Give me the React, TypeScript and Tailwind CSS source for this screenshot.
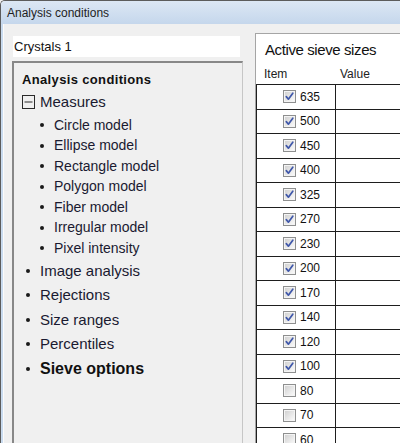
import React from "react";

const subItems = [
  "Circle model",
  "Ellipse model",
  "Rectangle model",
  "Polygon model",
  "Fiber model",
  "Irregular model",
  "Pixel intensity",
];

const topItems = ["Image analysis", "Rejections", "Size ranges", "Percentiles"];

const sieves: [string, boolean][] = [
  ["635", true],
  ["500", true],
  ["450", true],
  ["400", true],
  ["325", true],
  ["270", true],
  ["230", true],
  ["200", true],
  ["170", true],
  ["140", true],
  ["120", true],
  ["100", true],
  ["80", false],
  ["70", false],
  ["60", false],
];

function CheckBox({ checked }: { checked: boolean }) {
  return (
    <svg width="13" height="13" viewBox="0 0 13 13" className="shrink-0">
      <defs>
        <linearGradient id="cbg" x1="0" y1="0" x2="1" y2="1">
          <stop offset="0" stopColor="#d2d2d2" />
          <stop offset="1" stopColor="#f9f9f9" />
        </linearGradient>
      </defs>
      <rect x="0.5" y="0.5" width="12" height="12" fill="#f4f4f4" stroke="#8e8f8f" />
      <rect x="2" y="2" width="9" height="9" fill="url(#cbg)" />
      {checked && (
        <path
          d="M3.3 6.6 L5.4 9.2 L9.8 3.2"
          stroke="#4058aa"
          strokeWidth="1.7"
          fill="none"
          strokeLinecap="round"
          strokeLinejoin="round"
        />
      )}
    </svg>
  );
}

function MinusBox() {
  return (
    <svg width="13" height="15" viewBox="0 0 13 15" className="shrink-0">
      <rect x="0.5" y="0.5" width="12" height="13" fill="none" stroke="#2a2a2a" />
      <line x1="2.5" y1="7" x2="10.5" y2="7" stroke="#2a2a2a" />
    </svg>
  );
}

function Bullet() {
  return <span className="block w-[4px] h-[4px] rounded-full bg-[#1a1a1a] shrink-0" />;
}

export default function App() {
  return (
    <div className="w-[400px] h-[443px] overflow-hidden bg-[#f0f0f0] font-['Liberation_Sans',Arial,sans-serif] text-[#111]">
      <div className="h-full flex flex-col border-l border-t border-[#5c5c5c] rounded-tl-[5px] overflow-hidden">
        <div className="h-[23px] shrink-0 flex items-center pl-[6px] text-[12px] text-[#1e1e1e] bg-linear-to-b from-[#dce7f4] to-[#c5d7ec]">
          Analysis conditions
        </div>
        <div className="flex-1 min-h-0 flex border-l-2 border-[#c9dbef]">
          <div className="flex-1 min-h-0 flex border-l border-[#fbfbfb] pl-[8px]">
            {/* left column */}
            <div className="w-[231px] shrink-0 flex flex-col">
              <div className="mt-[12px] ml-[1px] w-[227px] h-[21px] bg-white flex items-center pl-[1px] text-[13px] text-[#111]">
                Crystals 1
              </div>
              <div className="mt-[4px] flex-1 border-l-2 border-t-2 border-[#888] border-r border-r-[#c6c6c6] pl-[8px] text-[#1a1a30]">
                <div className="mt-[7px] h-[20px] flex items-center text-[13px] font-bold tracking-[0.35px] text-[#111]">
                  Analysis conditions
                </div>
                <div className="h-[25px] flex items-center">
                  <MinusBox />
                  <span className="ml-[5px] text-[15px]">Measures</span>
                </div>
                {subItems.map((s) => (
                  <div key={s} className="h-[20.5px] flex items-center pl-[18px]">
                    <Bullet />
                    <span className="ml-[10px] text-[14px]">{s}</span>
                  </div>
                ))}
                {topItems.map((s) => (
                  <div key={s} className="h-[24.5px] flex items-center pl-[4px]">
                    <Bullet />
                    <span className="ml-[10px] text-[15px]">{s}</span>
                  </div>
                ))}
                <div className="h-[24.5px] flex items-center pl-[4px]">
                  <Bullet />
                  <span className="ml-[10px] text-[16px] font-bold text-[#111]">Sieve options</span>
                </div>
              </div>
            </div>
            {/* right panel */}
            <div className="ml-[12px] mt-[9px] flex-1 min-w-0 bg-white border-l border-t border-[#a5a5a5] flex flex-col">
              <div className="h-[32px] shrink-0 flex items-center pl-[9px] text-[15px] tracking-[-0.4px] text-[#111]">
                Active sieve sizes
              </div>
              <div className="h-[18px] shrink-0 flex items-center pb-[3px] text-[12px] text-[#222]">
                <span className="w-[80px] pl-[8px]">Item</span>
                <span className="pl-[4px]">Value</span>
              </div>
              <div className="border-l border-[#1e1e1e]">
                {sieves.map(([v, c]) => (
                  <div key={v} className="h-[24.5px] flex border-t border-[#1e1e1e]">
                    <div className="w-[79px] shrink-0 border-r border-[#1e1e1e] flex items-center pl-[26px]">
                      <CheckBox checked={c} />
                      <span className="ml-[4px] text-[12px] text-[#111]">{v}</span>
                    </div>
                    <div className="flex-1" />
                  </div>
                ))}
              </div>
            </div>
          </div>
        </div>
      </div>
    </div>
  );
}
